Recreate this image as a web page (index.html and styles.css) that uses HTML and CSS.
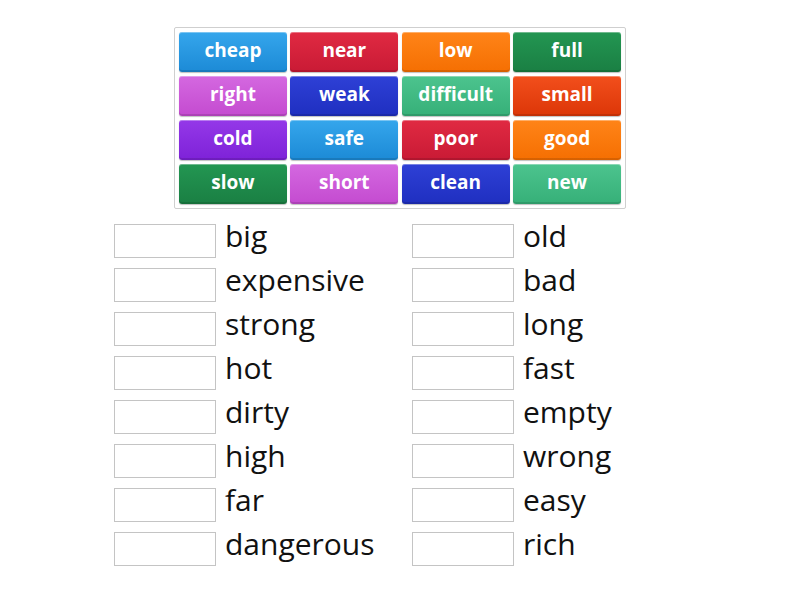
FILE: index.html
```html
<!DOCTYPE html>
<html>
<head>
<meta charset="utf-8">
<link rel="stylesheet" href="styles.css">
</head>
<body>
<div class="page">
  <div class="bank">
    <div class="tile c-blue">cheap</div>
    <div class="tile c-red">near</div>
    <div class="tile c-orange">low</div>
    <div class="tile c-dgreen">full</div>
    <div class="tile c-violet">right</div>
    <div class="tile c-navy">weak</div>
    <div class="tile c-mint">difficult</div>
    <div class="tile c-vermil">small</div>
    <div class="tile c-purple">cold</div>
    <div class="tile c-blue">safe</div>
    <div class="tile c-red">poor</div>
    <div class="tile c-orange">good</div>
    <div class="tile c-dgreen">slow</div>
    <div class="tile c-violet">short</div>
    <div class="tile c-navy">clean</div>
    <div class="tile c-mint">new</div>
  </div>
  <div class="targets">
    <div class="col">
      <div class="row"><div class="slot"></div><div class="word">big</div></div>
      <div class="row"><div class="slot"></div><div class="word">expensive</div></div>
      <div class="row"><div class="slot"></div><div class="word">strong</div></div>
      <div class="row"><div class="slot"></div><div class="word">hot</div></div>
      <div class="row"><div class="slot"></div><div class="word">dirty</div></div>
      <div class="row"><div class="slot"></div><div class="word">high</div></div>
      <div class="row"><div class="slot"></div><div class="word">far</div></div>
      <div class="row"><div class="slot"></div><div class="word">dangerous</div></div>
    </div>
    <div class="col">
      <div class="row"><div class="slot"></div><div class="word">old</div></div>
      <div class="row"><div class="slot"></div><div class="word">bad</div></div>
      <div class="row"><div class="slot"></div><div class="word">long</div></div>
      <div class="row"><div class="slot"></div><div class="word">fast</div></div>
      <div class="row"><div class="slot"></div><div class="word">empty</div></div>
      <div class="row"><div class="slot"></div><div class="word">wrong</div></div>
      <div class="row"><div class="slot"></div><div class="word">easy</div></div>
      <div class="row"><div class="slot"></div><div class="word">rich</div></div>
    </div>
  </div>
</div>
</body>
</html>
```
FILE: styles.css
```css
html, body {
  margin: 0;
  padding: 0;
  background: #ffffff;
}
body {
  width: 800px;
  height: 600px;
  overflow: hidden;
  font-family: "Open Sans", "Liberation Sans", sans-serif;
}
.page {
  padding-top: 27px;
  display: flex;
  flex-direction: column;
  align-items: center;
}
.bank {
  width: 442px;
  padding: 4px;
  border: 1px solid #cfcfcf;
  border-radius: 2px;
  display: grid;
  grid-template-columns: repeat(4, 1fr);
  column-gap: 3.5px;
  row-gap: 4px;
}
.tile {
  height: 40px;
  border-radius: 3px;
  color: #ffffff;
  font-weight: 700;
  font-size: 19px;
  line-height: 36px;
  text-align: center;
  box-sizing: border-box;
  box-shadow: inset 0 1px 0 rgba(255,255,255,0.35), inset 0 -2px 0 rgba(0,0,0,0.12), 0 1px 1px rgba(0,0,0,0.25);
}
.c-blue { background: linear-gradient(#35a6ec, #1c8ad6); }
.c-red { background: linear-gradient(#e02a42, #c91a35); }
.c-orange { background: linear-gradient(#ff8418, #f56f02); }
.c-dgreen { background: linear-gradient(#239652, #1a7f43); }
.c-violet { background: linear-gradient(#d468e0, #c44bd0); }
.c-navy { background: linear-gradient(#2e40d6, #1f2fc0); }
.c-mint { background: linear-gradient(#4cc48e, #36b078); }
.c-vermil { background: linear-gradient(#f24f1c, #dc3608); }
.c-purple { background: linear-gradient(#9438e8, #7e22d8); }
.targets {
  align-self: flex-start;
  margin-left: 114px;
  margin-top: 15px;
  display: flex;
}
.col {
  width: 298px;
  display: flex;
  flex-direction: column;
  gap: 10px;
}
.row {
  display: flex;
  align-items: flex-start;
}
.slot {
  width: 102px;
  height: 34px;
  box-sizing: border-box;
  border: 1px solid #c4c4c4;
  background: #ffffff;
  flex: none;
}
.word {
  margin-left: 9px;
  font-size: 30px;
  line-height: 24px;
  color: #111111;
  white-space: nowrap;
}
```
